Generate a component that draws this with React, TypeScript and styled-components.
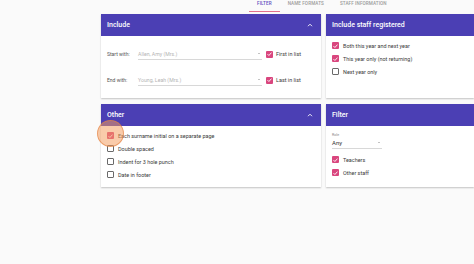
import React from "react";
import styled, { createGlobalStyle } from "styled-components";

const Global = createGlobalStyle`
  html, body { margin: 0; padding: 0; background: #fafafa; overflow: hidden; }
  body { font-family: Roboto, "Liberation Sans", Arial, sans-serif; width: 474px; height: 264px; }
`;

const Page = styled.div`
  padding-left: 101px;
  width: 474px;
  height: 264px;
  box-sizing: border-box;
`;

const TabBar = styled.div`
  display: flex;
  height: 14px;
  padding-left: 148px;
  box-sizing: border-box;
`;

const Tab = styled.div<{ $active?: boolean }>`
  height: 12px;
  padding: 0 8px;
  box-sizing: border-box;
  font-size: 4.6px;
  font-weight: 500;
  letter-spacing: 0.1px;
  line-height: 7px;
  color: ${(p) => (p.$active ? "#5a4fc0" : "#9a9a9a")};
  border-bottom: 1.5px solid ${(p) => (p.$active ? "#e2708c" : "transparent")};
  text-transform: uppercase;
  white-space: nowrap;
`;

const Grid = styled.div`
  display: grid;
  grid-template-columns: 220px 148px;
  grid-template-rows: 84px 83px;
  column-gap: 5px;
  row-gap: 6px;
`;

const Panel = styled.div`
  background: #fff;
  box-shadow: 0 1px 1.5px rgba(0, 0, 0, 0.22);
  display: flex;
  flex-direction: column;
  position: relative;
`;

const Header = styled.div`
  height: 22px;
  flex: none;
  background: #4b3fb4;
  color: #fff;
  display: flex;
  align-items: center;
  justify-content: space-between;
  padding: 0 8px 0 6px;
  font-size: 7px;
  font-weight: 500;
`;

const Chevron = styled.svg`
  width: 6px;
  height: 4px;
`;

const Body = styled.div<{ $pt?: number }>`
  padding: ${(p) => p.$pt ?? 3}px 6px 0 6px;
  display: flex;
  flex-direction: column;
`;

const RangeRow = styled.div<{ $mt: number }>`
  display: flex;
  align-items: center;
  height: 14px;
  margin-top: ${(p) => p.$mt}px;
`;

const FieldLabel = styled.div`
  width: 31px;
  font-size: 5px;
  color: #555;
`;

const SelectBox = styled.div<{ $w: number }>`
  width: ${(p) => p.$w}px;
  height: 12px;
  border-bottom: 0.6px solid #d8d8d8;
  display: flex;
  align-items: center;
  justify-content: space-between;
  box-sizing: border-box;
  padding-right: 2px;
`;

const SelectText = styled.span<{ $muted?: boolean }>`
  font-size: ${(p) => (p.$muted ? 5.2 : 6)}px;
  color: ${(p) => (p.$muted ? "#b5b5b5" : "#333")};
`;

const Arrow = styled.span`
  width: 0;
  height: 0;
  border-left: 1.3px solid transparent;
  border-right: 1.3px solid transparent;
  border-top: 1.5px solid #888;
`;

const CheckRow = styled.div`
  display: flex;
  align-items: center;
  height: 13px;
  gap: 4px;
  font-size: 5.45px;
  color: #3a3a3a;
  white-space: nowrap;
`;

const InlineCheck = styled.div`
  display: flex;
  align-items: center;
  gap: 3px;
  margin-left: 4px;
  font-size: 5.45px;
  color: #3a3a3a;
  white-space: nowrap;
`;

const Box = styled.span<{ $on?: boolean }>`
  position: relative;
  width: 7px;
  height: 7px;
  flex: none;
  box-sizing: border-box;
  border-radius: 1px;
  background: ${(p) => (p.$on ? "#d9467e" : "#fff")};
  border: ${(p) => (p.$on ? "none" : "1px solid #6a6a6a")};
  display: flex;
  align-items: center;
  justify-content: center;
`;

const Ripple = styled.span`
  position: absolute;
  left: 50%;
  top: 50%;
  width: 27px;
  height: 27px;
  margin-left: -13.5px;
  margin-top: -15.5px;
  border-radius: 50%;
  background: rgba(244, 156, 92, 0.52);
  border: 0.8px solid rgba(226, 128, 64, 0.6);
  box-sizing: border-box;
  pointer-events: none;
  z-index: 5;
`;

const TinyLabel = styled.div`
  font-size: 3.6px;
  color: #888;
  margin-top: 7px;
  height: 4px;
  line-height: 4px;
`;

const Spacer = styled.div`
  height: 4px;
`;

const Check = () => (
  <svg width="5" height="4" viewBox="0 0 10 8">
    <path d="M1 4.2 L3.8 7 L9 1.2" fill="none" stroke="#fff" strokeWidth="1.8" />
  </svg>
);

const CheckBox = ({ on, ripple }: { on?: boolean; ripple?: boolean }) => (
  <Box $on={on}>
    {on && <Check />}
    {ripple && <Ripple />}
  </Box>
);

const Up = () => (
  <Chevron viewBox="0 0 6 4">
    <path d="M1 3.2 L3 1.2 L5 3.2" fill="none" stroke="#fff" strokeWidth="0.9" />
  </Chevron>
);

export default function App() {
  return (
    <>
      <Global />
      <Page>
        <TabBar>
          <Tab $active>Filter</Tab>
          <Tab>Name formats</Tab>
          <Tab>Staff information</Tab>
        </TabBar>
        <Grid>
          <Panel>
            <Header>
              <span>Include</span>
              <Up />
            </Header>
            <Body $pt={0}>
              <RangeRow $mt={11}>
                <FieldLabel>Start with:</FieldLabel>
                <SelectBox $w={124}>
                  <SelectText $muted>Allen, Amy (Mrs.)</SelectText>
                  <Arrow />
                </SelectBox>
                <InlineCheck>
                  <CheckBox on />
                  <span>First in list</span>
                </InlineCheck>
              </RangeRow>
              <RangeRow $mt={12}>
                <FieldLabel>End with:</FieldLabel>
                <SelectBox $w={124}>
                  <SelectText $muted>Young, Leah (Mrs.)</SelectText>
                  <Arrow />
                </SelectBox>
                <InlineCheck>
                  <CheckBox on />
                  <span>Last in list</span>
                </InlineCheck>
              </RangeRow>
            </Body>
          </Panel>
          <Panel>
            <Header>
              <span>Include staff registered</span>
            </Header>
            <Body>
              <CheckRow>
                <CheckBox on />
                <span>Both this year and next year</span>
              </CheckRow>
              <CheckRow>
                <CheckBox on />
                <span>This year only (not returning)</span>
              </CheckRow>
              <CheckRow>
                <CheckBox />
                <span>Next year only</span>
              </CheckRow>
            </Body>
          </Panel>
          <Panel>
            <Header>
              <span>Other</span>
              <Up />
            </Header>
            <Body>
              <CheckRow>
                <CheckBox on ripple />
                <span>Each surname initial on a separate page</span>
              </CheckRow>
              <CheckRow>
                <CheckBox />
                <span>Double spaced</span>
              </CheckRow>
              <CheckRow>
                <CheckBox />
                <span>Indent for 3 hole punch</span>
              </CheckRow>
              <CheckRow>
                <CheckBox />
                <span>Date in footer</span>
              </CheckRow>
            </Body>
          </Panel>
          <Panel>
            <Header>
              <span>Filter</span>
            </Header>
            <Body $pt={0}>
              <TinyLabel>Role</TinyLabel>
              <SelectBox $w={50}>
                <SelectText>Any</SelectText>
                <Arrow />
              </SelectBox>
              <Spacer />
              <CheckRow>
                <CheckBox on />
                <span>Teachers</span>
              </CheckRow>
              <CheckRow>
                <CheckBox on />
                <span>Other staff</span>
              </CheckRow>
            </Body>
          </Panel>
        </Grid>
      </Page>
    </>
  );
}
